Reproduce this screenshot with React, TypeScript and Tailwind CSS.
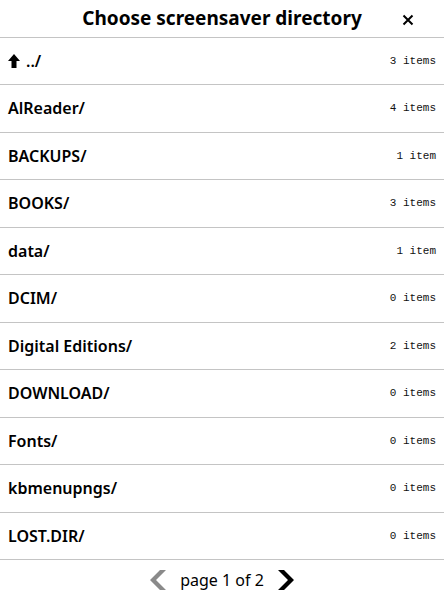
import React from 'react';

const ROWS = [
  { name: 'AlReader/', count: '4 items' },
  { name: 'BACKUPS/', count: '1 item' },
  { name: 'BOOKS/', count: '3 items' },
  { name: 'data/', count: '1 item' },
  { name: 'DCIM/', count: '0 items' },
  { name: 'Digital Editions/', count: '2 items' },
  { name: 'DOWNLOAD/', count: '0 items' },
  { name: 'Fonts/', count: '0 items' },
  { name: 'kbmenupngs/', count: '0 items' },
  { name: 'LOST.DIR/', count: '0 items' },
];

const Row: React.FC<{ children: React.ReactNode; count: string }> = ({ children, count }) => (
  <div className="h-[47.5px] flex items-center justify-between px-2 border-b border-[#c4c4c4]">
    <div className="flex items-center gap-1.5 text-[16px] font-semibold text-black">{children}</div>
    <span className="text-[11px] text-[#111] font-['Liberation_Mono',monospace]">{count}</span>
  </div>
);

export default function App() {
  return (
    <div className="w-[444px] h-[600px] bg-white flex flex-col font-['Noto_Sans',sans-serif] text-black overflow-hidden">
      {/* header */}
      <div className="relative h-[37.5px] flex items-center justify-center border-b border-[#c4c4c4]">
        <h1 className="text-[19px] font-bold">Choose screensaver directory</h1>
        <span className="absolute right-[30px] top-[14px]">
          <svg width="12" height="12" viewBox="0 0 12 12">
            <path d="M1.5 1.5L10.5 10.5M10.5 1.5L1.5 10.5" stroke="#000" strokeWidth="2" />
          </svg>
        </span>
      </div>

      <Row count="3 items">
        <svg width="12" height="14" viewBox="0 0 12 14">
          <path d="M6 0L12 7H8.5V14H3.5V7H0Z" fill="#000" />
        </svg>
        <span>../</span>
      </Row>
      {ROWS.map(r => (
        <Row key={r.name} count={r.count}>
          <span>{r.name}</span>
        </Row>
      ))}

      {/* pagination */}
      <div className="flex-1 flex items-center justify-center gap-3">
        <svg width="20" height="22" viewBox="0 0 20 22">
          <path d="M18 1H12L2 11L12 21H18L8 11Z" fill="#8a8a8a" />
        </svg>
        <span className="text-[16px]">page 1 of 2</span>
        <svg width="20" height="22" viewBox="0 0 20 22">
          <path d="M2 1H8L18 11L8 21H2L12 11Z" fill="#000" />
        </svg>
      </div>
    </div>
  );
}
